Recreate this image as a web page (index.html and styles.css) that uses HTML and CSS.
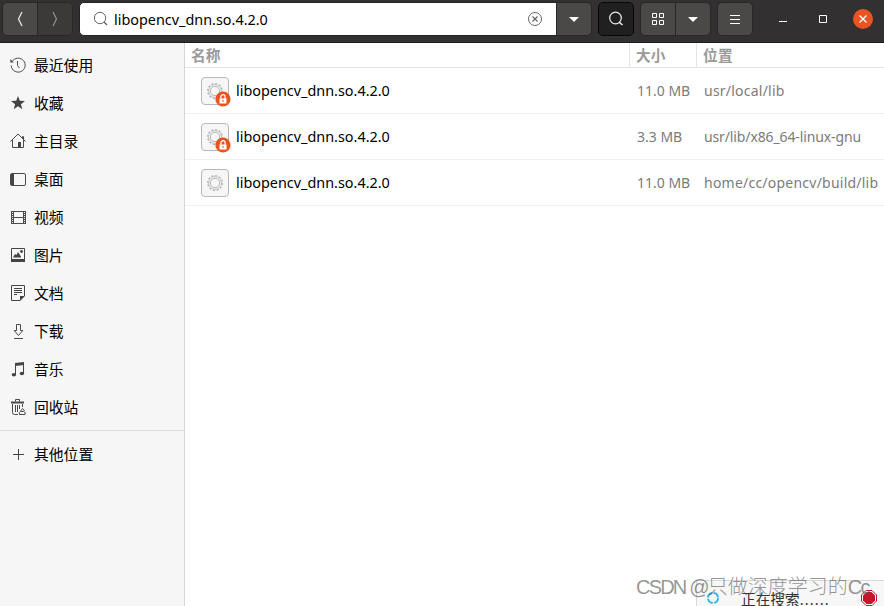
FILE: index.html
```
<!DOCTYPE html>
<html lang="zh-CN">
<head>
    <meta charset="UTF-8">
    <meta name="viewport" content="width=device-width, initial-scale=1.0">
    <title>libopencv_dnn.so.4.2.0</title>
    <link rel="stylesheet" href="styles.css">
</head>
<body>

    <!-- shared file icon -->
    <svg width="0" height="0" class="defs">
        <symbol id="gear" viewBox="0 0 26 26">
            <circle cx="13" cy="13" r="7.200" fill="none" stroke="#b0b0b0" stroke-width="1.500" stroke-dasharray="2 1.770"/>
            <circle cx="13" cy="13" r="6.500" fill="#f3f3f3" stroke="#bcbcbc" stroke-width=".8"/>
            <circle cx="13" cy="13" r="4.700" fill="#f7f7f7" stroke="#b4b4b4" stroke-width="1"/>
        </symbol>
        <symbol id="lock" viewBox="0 0 16 16">
            <circle cx="8" cy="8" r="7.600" fill="#e95420"/>
            <path d="M5.900 8V5.800a2.100 2.100 0 0 1 4.200 0V8" fill="none" stroke="#fff" stroke-width="1.200"/>
            <path d="M4.500 7.500h7v5h-7z" fill="#fff"/>
            <path d="M7.500 9h1v2h-1z" fill="#e95420"/>
        </symbol>
    </svg>

    <header class="headerbar">
        <div class="group nav">
            <button class="btn"><svg width="16" height="16" viewBox="0 0 16 16"><path d="M10 1 6.500 8l3.500 7" fill="none" stroke="#eee" stroke-width="1.200"/></svg></button>
            <button class="btn disabled"><svg width="16" height="16" viewBox="0 0 16 16"><path d="M6 1l3.500 7L6 15" fill="none" stroke="#999" stroke-width="1.100"/></svg></button>
        </div>
        <div class="group search">
            <div class="entry">
                <svg width="16" height="16" viewBox="0 0 16 16" fill="none" stroke="#666"><circle cx="7" cy="7" r="5.700"/><path d="M11 11l3 3" stroke-width="1.400"/></svg>
                <span class="query">libopencv_dnn.so.4.2.0</span>
                <svg width="16" height="16" viewBox="0 0 16 16" fill="none" stroke="#666"><circle cx="8" cy="8" r="6.500"/><path d="M5.500 5.500l5 5M10.500 5.500l-5 5" stroke-width="1.200"/></svg>
            </div>
            <button class="btn"><svg width="10" height="5" viewBox="0 0 10 5"><path d="M0 0h10L5 5z" fill="#fff"/></svg></button>
        </div>
        <button class="btn active"><svg width="16" height="16" viewBox="0 0 16 16" fill="none" stroke="#eee"><circle cx="7.500" cy="7" r="5.800" stroke-width="1.200"/><path d="M11 11l3.500 3" stroke-width="1.600"/></svg></button>
        <div class="group view">
            <button class="btn"><svg width="12" height="12" viewBox="0 0 12 12" fill="none" stroke="#fff"><path d="M.5.5h4v4h-4zM7.500.5h4v4h-4zM.5 7.500h4v4h-4zM7.500 7.500h4v4h-4z"/></svg></button>
            <button class="btn"><svg width="10" height="5" viewBox="0 0 10 5"><path d="M0 0h10L5 5z" fill="#fff"/></svg></button>
        </div>
        <button class="btn menu"><svg width="10" height="9" viewBox="0 0 10 9"><path d="M0 .5h10M0 4.500h10M0 8.500h10" stroke="#fff"/></svg></button>
        <div class="window-controls">
            <svg width="10" height="10" viewBox="0 0 10 10"><path d="M1 7.500h8" stroke="#fff"/></svg>
            <svg width="10" height="10" viewBox="0 0 10 10"><path d="M1.500 1.500h7v7h-7z" fill="none" stroke="#fff"/></svg>
            <svg width="20" height="20" viewBox="0 0 20 20"><circle cx="10" cy="10" r="10" fill="#e95420"/><path d="M6.500 6.500l7 7M13.500 6.500l-7 7" stroke="#fff" stroke-width="1.300"/></svg>
        </div>
    </header>

    <div class="content">
        <nav class="sidebar">
            <a class="place"><svg width="16" height="16" viewBox="0 0 16 16" fill="none" stroke="#4a4a4a"><path d="M2.200 4.500a7 7 0 1 1-1 4M7.500 4v4.500l2 2.500"/><path d="M.3 2v3.500h3.500z" fill="#4a4a4a" stroke="none"/></svg><span>最近使用</span></a>
            <a class="place"><svg width="16" height="16" viewBox="0 0 16 16"><path d="M8 1l1.800 4.800 5.200.2-4.100 3.200 1.400 5L8 11.300l-4.300 2.900 1.400-5L1 6l5.200-.2z" fill="#444"/></svg><span>收藏</span></a>
            <a class="place"><svg width="16" height="16" viewBox="0 0 16 16" fill="none" stroke="#4a4a4a"><path d="M.5 8.500L8 1l7.500 7.500M2.500 7v7.500h11V7M12.500 5.500V3.500h1v3"/><path d="M8 9h3v5H8z" fill="#444" stroke="none"/></svg><span>主目录</span></a>
            <a class="place"><svg width="16" height="16" viewBox="0 0 16 16"><rect x=".5" y="2.500" width="15" height="12" rx="1.500" fill="none" stroke="#4a4a4a"/><path d="M1 3h3v11H1z" fill="#444"/></svg><span>桌面</span></a>
            <a class="place"><svg width="16" height="16" viewBox="0 0 16 16" fill="none" stroke="#4a4a4a"><path d="M3.500 2v13M13.500 2v13M3 2.500h11M3 8.500h11M3 14.500h11"/><path d="M1.500 2v13M15.500 2v13"/><path d="M2.500 2v13M14.500 2v13" stroke-dasharray="1 1"/></svg><span>视频</span></a>
            <a class="place"><svg width="16" height="16" viewBox="0 0 16 16"><path d="M1.500 1.500h13v13h-13z" fill="none" stroke="#444"/><path d="M1 12h14v3H1zM3 10.500l2-3.500 1.500 1 1.500-3 3 4.500v1z" fill="#444"/><circle cx="11.500" cy="4.500" r="1.400" fill="#444"/></svg><span>图片</span></a>
            <a class="place"><svg width="16" height="16" viewBox="0 0 16 16"><path d="M10 15.500H1.500V.5h13V11" fill="none" stroke="#444"/><path d="M10 16v-5h5zM4 3h8v1H4zM4 5h8v1H4zM4 7h8v1H4zM4 9h3v1H4z" fill="#444"/></svg><span>文档</span></a>
            <a class="place"><svg width="16" height="16" viewBox="0 0 16 16" fill="none" stroke="#4a4a4a"><path d="M6.500 1.500h4v6h2.300l-4.300 5-4.300-5h2.300zM4 15.500h9"/></svg><span>下载</span></a>
            <a class="place"><svg width="16" height="16" viewBox="0 0 16 16" fill="#444"><path d="M5 2l9-1v3L5 5z"/><path d="M5.500 3v10.500M13.500 2v10" fill="none" stroke="#444"/><ellipse cx="3.900" cy="13.700" rx="2.200" ry="1.800"/><ellipse cx="11.900" cy="12.500" rx="2.200" ry="1.800"/></svg><span>音乐</span></a>
            <a class="place"><svg width="16" height="16" viewBox="0 0 16 16" fill="none" stroke="#4a4a4a"><path d="M1 3.500h13" stroke-width="2"/><path d="M5.500 2.500v-2h4v2M2.500 5v8.500q0 2 2 2H8M12.500 5v3M5.500 6v7M7.500 6v7M9.500 6v4"/><path d="M9.500 15.500q-1-2 1-3h3q3 1 1.500 3zM10.500 12l2-2.500 2 2.500"/></svg><span>回收站</span></a>
            <hr>
            <a class="place"><svg width="16" height="16" viewBox="0 0 16 16"><path d="M3 8.500h11M8.500 3v11" stroke="#444"/></svg><span>其他位置</span></a>
        </nav>

        <main class="files">
            <div class="row head">
                <span class="name">名称</span>
                <span class="size">大小</span>
                <span class="location">位置</span>
            </div>
            <div class="row">
                <span class="name"><span class="icon"><svg width="26" height="26"><use href="#gear"/></svg><svg class="emblem" width="16" height="16"><use href="#lock"/></svg></span><span class="filename">libopencv_dnn.so.4.2.0</span></span>
                <span class="size">11.0 MB</span>
                <span class="location">usr/local/lib</span>
            </div>
            <div class="row">
                <span class="name"><span class="icon"><svg width="26" height="26"><use href="#gear"/></svg><svg class="emblem" width="16" height="16"><use href="#lock"/></svg></span><span class="filename">libopencv_dnn.so.4.2.0</span></span>
                <span class="size">3.3 MB</span>
                <span class="location tight">usr/lib/x86_64-linux-gnu</span>
            </div>
            <div class="row">
                <span class="name"><span class="icon"><svg width="26" height="26"><use href="#gear"/></svg></span><span class="filename">libopencv_dnn.so.4.2.0</span></span>
                <span class="size">11.0 MB</span>
                <span class="location">home/cc/opencv/build/lib</span>
            </div>
        </main>
    </div>

    <div class="status">
        <svg width="14" height="14" viewBox="0 0 14 14"><circle cx="7" cy="7" r="5" fill="none" stroke="#35b5e8" stroke-width="2" stroke-dasharray="6.500 1.350"/></svg>
        <span>正在搜索<i>......</i></span>
        <svg width="16" height="16" viewBox="0 0 16 16"><path d="M5 .5h6L15.500 5v6L11 15.500H5L.5 11V5z" fill="#fff" stroke="#c7162b"/><path d="M5.500 2h5L14 5.500v5L10.500 14h-5L2 10.500v-5z" fill="#c7162b"/></svg>
    </div>
    <div class="watermark"><span>CSDN @</span>只做深度学习的<span>Cc</span></div>

</body>
</html>
```
FILE: styles.css
```
* {
    box-sizing: border-box;
}
body {
    margin: 0;
    height: 606px;
    overflow: hidden;
    position: relative;
    display: flex;
    flex-direction: column;
    background: #fff;
    color: #000;
    font-family: "Noto Sans", "Noto Sans CJK SC", sans-serif;
    font-size: 14px;
}
svg {
    display: block;
    flex: none;
}
.defs {
    position: absolute;
}
.headerbar {
    height: 43px;
    flex: none;
    display: flex;
    align-items: flex-start;
    padding: 2px 11px 0 2px;
    background: #323030;
    border-bottom: 1px solid #1c1a1a;
}
.group {
    display: flex;
}
.btn {
    width: 36px;
    height: 34px;
    padding: 0;
    display: flex;
    align-items: center;
    justify-content: center;
    background: #4a4947;
    border: 1px solid #282727;
    border-radius: 5px;
}
.group .btn:first-child {
    border-radius: 5px 0 0 5px;
}
.group .btn:last-child {
    margin-left: -1px;
    border-radius: 0 5px 5px 0;
}
.disabled {
    background: #3b3a39;
}
.search {
    margin: 0 6px;
}
.entry {
    width: 478px;
    height: 34px;
    display: flex;
    align-items: center;
    padding: 0 13px;
    background: #fff;
    border: 1px solid #242323;
    border-radius: 5px 0 0 5px;
}
.query {
    flex: 1;
    margin-left: 5px;
}
.query, .filename {
    font-size: 14.4px;
}
.btn.active {
    background: #202020;
    border-color: #080808;
}
.view {
    margin: 0 6px;
}
.window-controls {
    flex: 1;
    height: 34px;
    display: flex;
    align-items: center;
    justify-content: flex-end;
    gap: 30px;
}
.window-controls svg:last-child {
    margin-left: -5px;
}
.content {
    flex: 1;
    display: flex;
}
.sidebar {
    width: 185px;
    padding-top: 3px;
    background: #f6f6f6;
    border-right: 1px solid #d6d6d6;
}
.place {
    height: 38px;
    display: flex;
    align-items: center;
    gap: 8px;
    padding-left: 10px;
    font-size: 14.8px;
}
.place span {
    padding-bottom: 2px;
}
.sidebar hr {
    height: 1px;
    margin: 4px 0;
    border: 0;
    background: #dadada;
}
.files {
    flex: 1;
}
.row {
    height: 46px;
    display: grid;
    grid-template-columns: 445px 67px 1fr;
    align-items: center;
    border-bottom: 1px solid #f0f0f0;
    white-space: nowrap;
}
.size, .location {
    padding-left: 7px;
    color: #7b7b7b;
}
.location {
    letter-spacing: 0.23px;
}
.tight {
    letter-spacing: -0.12px;
}
.row .name {
    display: flex;
    align-items: center;
    padding-left: 16px;
}
.icon {
    position: relative;
    width: 28px;
    height: 28px;
    margin-right: 7px;
    background: #f6f6f6;
    border: 1px solid #b8b8b8;
    border-radius: 4px;
}
.emblem {
    position: absolute;
    left: 13px;
    top: 13px;
}
.head {
    height: 25px;
    align-items: stretch;
    border-color: #e4e4e4;
    font-size: 14.67px;
    font-weight: bold;
    line-height: 25px;
}
.head span, .head .name {
    padding-left: 6px;
    color: #9a9a9a;
}
.head .name, .head .size {
    border-right: 1px solid #e4e4e4;
}
.status {
    position: absolute;
    left: 696px;
    top: 580px;
    width: 200px;
    height: 40px;
    display: flex;
    align-items: center;
    padding: 0 0 4px 9px;
    background: #f7f7f7;
    border: 1px solid #d8d8d8;
    color: #333;
    font-size: 14.67px;
}
.status span {
    width: 120px;
    margin-left: 21px;
}
.status i {
    font-style: normal;
    letter-spacing: 1.1px;
}
.watermark {
    position: absolute;
    left: 636px;
    top: 573px;
    color: rgba(90, 90, 90, 0.65);
    font-family: "Liberation Sans", "Noto Sans CJK SC", sans-serif;
    font-size: 20px;
    font-weight: 300;
    line-height: 28px;
    white-space: nowrap;
}
.watermark span {
    letter-spacing: -1.8px;
}
```
